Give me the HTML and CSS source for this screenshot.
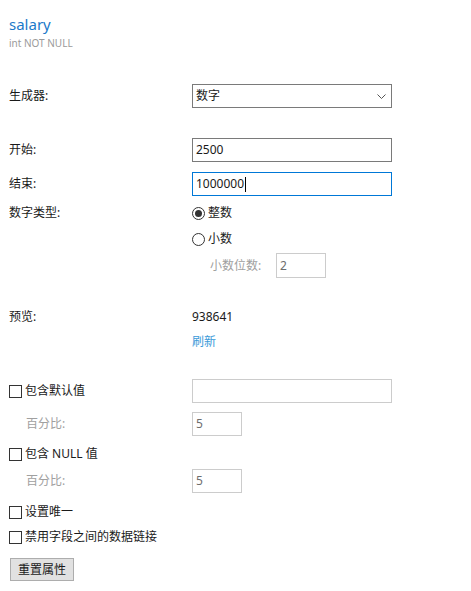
FILE: index.html
```html
<!DOCTYPE html>
<html lang="zh-CN">
<head>
<meta charset="utf-8">
<title>salary</title>
<link rel="stylesheet" href="styles.css">
</head>
<body>
<div class="page">
  <header class="field-head">
    <div class="field-name">salary</div>
    <div class="field-type">int NOT NULL</div>
  </header>

  <div class="row mt-34">
    <span class="label">生成器:</span>
    <div class="select">
      <span>数字</span>
      <svg class="chevron" width="9" height="5" viewBox="0 0 9 5"><path d="M0.5 0.5 L4.5 4.5 L8.5 0.5" fill="none" stroke="#555" stroke-width="1"/></svg>
    </div>
  </div>

  <div class="row mt-30">
    <span class="label">开始:</span>
    <div class="textbox">2500</div>
  </div>
  <div class="row mt-10">
    <span class="label">结束:</span>
    <div class="textbox focused">1000000<span class="caret"></span></div>
  </div>

  <div class="row mt-5">
    <span class="label">数字类型:</span>
    <div class="radio-line"><span class="radio checked"></span><span>整数</span></div>
  </div>
  <div class="row mt-2">
    <span class="label"></span>
    <div class="radio-line"><span class="radio"></span><span>小数</span></div>
  </div>
  <div class="row row-tall mt-2">
    <span class="label"></span>
    <div class="sub-line">
      <span class="sub-label disabled">小数位数:</span>
      <div class="textbox small disabled">2</div>
    </div>
  </div>

  <div class="row mt-27">
    <span class="label">预览:</span>
    <span class="value">938641</span>
  </div>
  <div class="row mt-1">
    <span class="label"></span>
    <span class="link">刷新</span>
  </div>

  <div class="row mt-25">
    <label class="check-line"><span class="checkbox"></span><span>包含默认值</span></label>
    <div class="textbox disabled"></div>
  </div>
  <div class="row mt-9">
    <span class="label indent disabled">百分比:</span>
    <div class="textbox small disabled">5</div>
  </div>
  <div class="row mt-6">
    <label class="check-line"><span class="checkbox"></span><span>包含 NULL 值</span></label>
  </div>
  <div class="row mt-3">
    <span class="label indent disabled">百分比:</span>
    <div class="textbox small disabled">5</div>
  </div>
  <div class="row mt-7">
    <label class="check-line"><span class="checkbox"></span><span>设置唯一</span></label>
  </div>
  <div class="row mt-1">
    <label class="check-line"><span class="checkbox"></span><span>禁用字段之间的数据链接</span></label>
  </div>

  <button class="btn mt-9" type="button">重置属性</button>
</div>
</body>
</html>
```

FILE: styles.css
```css
html, body {
  margin: 0;
  padding: 0;
  background: #ffffff;
}

body {
  font-family: "Noto Sans", "Noto Sans CJK SC", sans-serif;
  font-size: 12px;
  line-height: 16px;
  color: #1a1a1a;
}

.page {
  padding: 14px 0 0 9px;
}

.field-head {
  display: flex;
  flex-direction: column;
}

.field-name {
  font-size: 15px;
  line-height: 20px;
  color: #1b79c9;
}

.field-type {
  margin-top: 2px;
  font-size: 10px;
  line-height: 14px;
  color: #9a9a9a;
}

.row {
  display: grid;
  grid-template-columns: 183px 200px;
  align-items: center;
  height: 24px;
}

.row-tall {
  height: 25px;
}

.mt-1 { margin-top: 1px; }
.mt-2 { margin-top: 2px; }
.mt-3 { margin-top: 3px; }
.mt-5 { margin-top: 5px; }
.mt-6 { margin-top: 6px; }
.mt-7 { margin-top: 7px; }
.mt-9 { margin-top: 9px; }
.mt-10 { margin-top: 10px; }
.mt-25 { margin-top: 25px; }
.mt-27 { margin-top: 27px; }
.mt-30 { margin-top: 30px; }
.mt-34 { margin-top: 34px; }

.label.indent {
  padding-left: 17px;
}

.disabled {
  color: #a0a0a0;
}

.select,
.textbox {
  box-sizing: border-box;
  height: 24px;
  border: 1px solid #7a7a7a;
  padding: 0 3px;
  display: flex;
  align-items: center;
  background: #fff;
  color: #1a1a1a;
}

.select {
  justify-content: space-between;
  padding-right: 5px;
}

.chevron {
  display: block;
}

.textbox.focused {
  border-color: #0078d7;
}

.caret {
  display: inline-block;
  width: 1px;
  height: 15px;
  background: #000;
  margin-left: 1px;
}

.textbox.disabled {
  border-color: #cccccc;
  color: #6d6d6d;
}

.textbox.small {
  width: 50px;
}

.row-tall .textbox {
  height: 25px;
}

.radio-line,
.check-line {
  display: flex;
  align-items: center;
}

.radio {
  box-sizing: border-box;
  width: 13px;
  height: 13px;
  border: 1px solid #333;
  border-radius: 50%;
  margin-right: 3px;
  display: flex;
  align-items: center;
  justify-content: center;
}

.radio.checked::after {
  content: "";
  width: 7px;
  height: 7px;
  border-radius: 50%;
  background: #333;
}

.checkbox {
  box-sizing: border-box;
  width: 13px;
  height: 13px;
  border: 1px solid #333;
  background: #fff;
  margin-right: 3px;
}

.sub-line {
  display: flex;
  align-items: center;
  padding-left: 18px;
}

.sub-label {
  width: 66px;
}

.link {
  color: #3a9ad9;
}

.btn {
  display: block;
  box-sizing: border-box;
  height: 23px;
  margin-left: 1px;
  padding: 0 7px;
  border: 1px solid #adadad;
  background: #e1e1e1;
  font-family: inherit;
  font-size: 12px;
  line-height: 16px;
  color: #1a1a1a;
}
```
